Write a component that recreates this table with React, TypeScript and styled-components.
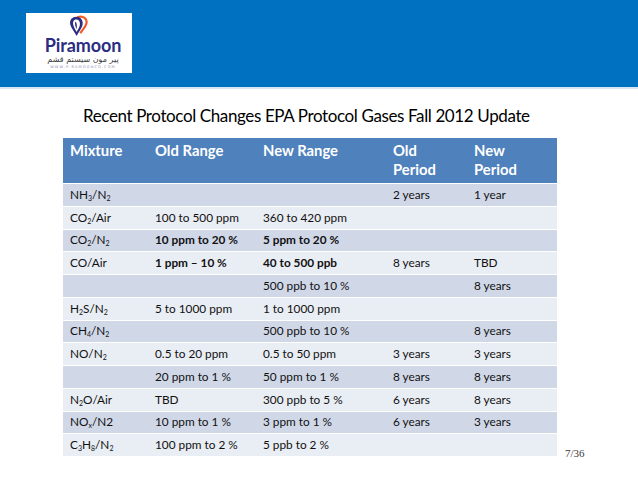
import React from 'react';
import styled, { createGlobalStyle } from 'styled-components';

type Row = {
  mixture: React.ReactNode;
  oldRange?: string;
  newRange?: string;
  oldPeriod?: string;
  newPeriod?: string;
  boldRanges?: boolean;
};

const GlobalStyle = createGlobalStyle`
  html, body {
    margin: 0;
    padding: 0;
    background: #ffffff;
  }
  body {
    width: 638px;
    height: 478px;
    overflow: hidden;
    font-family: Lato, "Open Sans", sans-serif;
  }
`;

const Slide = styled.div`
  width: 638px;
  height: 478px;
  display: flex;
  flex-direction: column;
`;

const Banner = styled.header`
  height: 89px;
  background: #0070c0;
  border-bottom: 2px solid #d9e5f1;
  padding: 13px 0 0 26px;
  box-sizing: border-box;
`;

const LogoCard = styled.div`
  width: 106px;
  height: 60px;
  background: #ffffff;
  display: flex;
  flex-direction: column;
  align-items: center;
  padding-top: 2px;
  box-sizing: border-box;
`;

const BrandName = styled.div`
  font-family: Lato, sans-serif;
  font-weight: 700;
  font-size: 18px;
  line-height: 17px;
  color: #2b2d82;
  letter-spacing: -0.1px;
  margin-left: 8px;
`;

const BrandFarsi = styled.div`
  font-family: "DejaVu Sans", sans-serif;
  font-size: 8px;
  line-height: 11px;
  color: #3a3a3a;
  direction: rtl;
  margin-left: 8px;
`;

const BrandUrl = styled.div`
  font-family: "DejaVu Sans", sans-serif;
  font-size: 3.6px;
  line-height: 5px;
  letter-spacing: 1.1px;
  color: #8c8fb0;
  margin-left: 8px;
`;

const Title = styled.h1`
  margin: 15px 0 0 83px;
  font-family: Lato, sans-serif;
  font-weight: 400;
  font-size: 17px;
  letter-spacing: -0.38px;
  line-height: 24px;
  color: #000000;
`;

const Body = styled.div`
  display: flex;
  align-items: flex-end;
  gap: 8px;
  margin: 10px 0 0 63px;
`;

const Table = styled.div`
  width: 494px;
  display: flex;
  flex-direction: column;
`;

const cols = '85px 108px 130px 81px 90px';

const HeadRow = styled.div`
  display: grid;
  grid-template-columns: ${cols};
  height: 45px;
  background: #4f81bd;
  padding-top: 3px;
  box-sizing: border-box;
`;

const HeadCell = styled.div`
  padding-left: 7px;
  font-weight: 700;
  font-size: 14.8px;
  line-height: 19px;
  color: #ffffff;
`;

const DataRow = styled.div<{ $shade: boolean }>`
  display: grid;
  grid-template-columns: ${cols};
  height: 22.75px;
  align-items: center;
  box-sizing: border-box;
  border-top: 1px solid #ffffff;
  background: ${(p) => (p.$shade ? '#d0d8e8' : '#e9edf4')};
`;

const Cell = styled.div<{ $bold?: boolean }>`
  padding-left: 7px;
  font-size: 11.8px;
  line-height: 14px;
  font-weight: ${(p) => (p.$bold ? 700 : 400)};
  color: #111111;
  white-space: nowrap;
`;

const Sub = styled.sub`
  font-size: 7px;
  line-height: 0;
  vertical-align: -2px;
`;

const PageNumber = styled.div`
  font-family: "Liberation Serif", serif;
  font-size: 11px;
  line-height: 12px;
  color: #3a3a3a;
  margin-bottom: -3px;
`;

function BalloonMark() {
  return (
    <svg width="26" height="22" viewBox="0 0 26 24">
      <path
        d="M12 2.2 C17.5 0.5 22.5 4 21 9.5 C20 13 17.5 15.5 15 19"
        fill="none"
        stroke="#f15a24"
        strokeWidth="2.4"
        strokeLinecap="round"
      />
      <path
        d="M10 2 C5 2 2.5 6 3.5 10.5 C4.5 14 7.5 17.5 10.5 23 C13 17.5 16.5 14 17 10 C17.5 5.5 14.5 2 10 2 Z"
        fill="#2b2d82"
      />
      <path
        d="M10 5 C7.3 5 6 7.5 6.7 10.5 C7.3 13 8.8 15.5 10.4 18.5 C12 15.5 13.6 13 14 10.5 C14.4 7.5 12.7 5 10 5 Z"
        fill="#ffffff"
      />
      <path
        d="M9.2 7 C8.2 8.5 8.6 11.5 10.4 15.5 C10.8 12 11 9 9.2 7 Z"
        fill="#2b2d82"
      />
    </svg>
  );
}

const headers: React.ReactNode[] = [
  'Mixture',
  'Old Range',
  'New Range',
  <>Old<br />Period</>,
  <>New<br />Period</>,
];

const rows: Row[] = [
  { mixture: <>NH<Sub>3</Sub>/N<Sub>2</Sub></>, oldPeriod: '2 years', newPeriod: '1 year' },
  { mixture: <>CO<Sub>2</Sub>/Air</>, oldRange: '100 to 500 ppm', newRange: '360 to 420 ppm' },
  { mixture: <>CO<Sub>2</Sub>/N<Sub>2</Sub></>, oldRange: '10 ppm to 20 %', newRange: '5 ppm to 20 %', boldRanges: true },
  { mixture: 'CO/Air', oldRange: '1 ppm – 10 %', newRange: '40 to 500 ppb', oldPeriod: '8 years', newPeriod: 'TBD', boldRanges: true },
  { mixture: '', newRange: '500 ppb to 10 %', newPeriod: '8 years' },
  { mixture: <>H<Sub>2</Sub>S/N<Sub>2</Sub></>, oldRange: '5 to 1000 ppm', newRange: '1 to 1000 ppm' },
  { mixture: <>CH<Sub>4</Sub>/N<Sub>2</Sub></>, newRange: '500 ppb to 10 %', newPeriod: '8 years' },
  { mixture: <>NO/N<Sub>2</Sub></>, oldRange: '0.5 to 20 ppm', newRange: '0.5 to 50 ppm', oldPeriod: '3 years', newPeriod: '3 years' },
  { mixture: '', oldRange: '20 ppm to 1 %', newRange: '50 ppm to 1 %', oldPeriod: '8 years', newPeriod: '8 years' },
  { mixture: <>N<Sub>2</Sub>O/Air</>, oldRange: 'TBD', newRange: '300 ppb to 5 %', oldPeriod: '6 years', newPeriod: '8 years' },
  { mixture: <>NO<Sub>x</Sub>/N2</>, oldRange: '10 ppm to 1 %', newRange: '3 ppm to 1 %', oldPeriod: '6 years', newPeriod: '3 years' },
  { mixture: <>C<Sub>3</Sub>H<Sub>8</Sub>/N<Sub>2</Sub></>, oldRange: '100 ppm to 2 %', newRange: '5 ppb to 2 %' },
];

export default function App() {
  return (
    <Slide>
      <GlobalStyle />
      <Banner>
        <LogoCard>
          <BalloonMark />
          <BrandName>Piramoon</BrandName>
          <BrandFarsi>پیر مون سیستم قشم</BrandFarsi>
          <BrandUrl>WWW.P-RAMOONCO.COM</BrandUrl>
        </LogoCard>
      </Banner>
      <Title>Recent Protocol Changes EPA Protocol Gases Fall 2012 Update</Title>
      <Body>
        <Table>
          <HeadRow>
            {headers.map((h, i) => (
              <HeadCell key={i}>{h}</HeadCell>
            ))}
          </HeadRow>
          {rows.map((r, i) => (
            <DataRow key={i} $shade={i % 2 === 0}>
              <Cell>{r.mixture}</Cell>
              <Cell $bold={r.boldRanges}>{r.oldRange}</Cell>
              <Cell $bold={r.boldRanges}>{r.newRange}</Cell>
              <Cell>{r.oldPeriod}</Cell>
              <Cell>{r.newPeriod}</Cell>
            </DataRow>
          ))}
        </Table>
        <PageNumber>7/36</PageNumber>
      </Body>
    </Slide>
  );
}
